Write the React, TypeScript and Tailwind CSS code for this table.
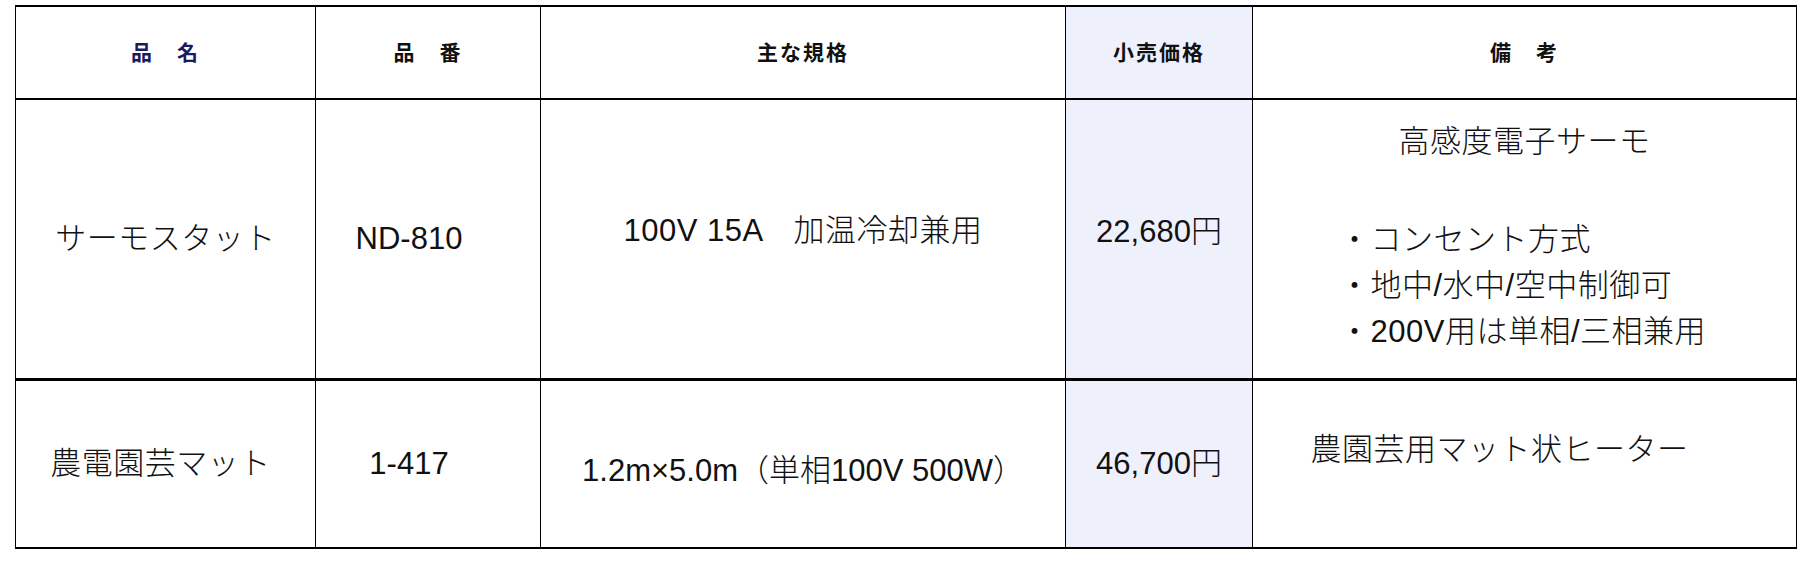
const font = "font-['Liberation_Sans','Noto_Sans_CJK_JP',sans-serif]";

export default function App() {
  return (
    <div className={`w-[1809px] h-[565px] bg-white pt-[5px] pl-[15px] text-[#111] ${font}`}>
      <table className="table-fixed border-collapse w-[1781px]">
        <colgroup>
          <col className="w-[300px]" />
          <col className="w-[225px]" />
          <col className="w-[525px]" />
          <col className="w-[187px]" />
          <col className="w-[544px]" />
        </colgroup>
        <thead>
          <tr className="h-[93px] text-[21px] font-bold tracking-[2px]">
            <th className="border-x border-x-black border-y-2 border-y-black text-[#1a1a5e] text-center">
              品　名
            </th>
            <th className="border-x border-x-black border-y-2 border-y-black text-center">品　番</th>
            <th className="border-x border-x-black border-y-2 border-y-black text-center">主な規格</th>
            <th className="border-x border-x-black border-y-2 border-y-black bg-[#eef0fc] text-center">
              小売価格
            </th>
            <th className="border-x border-x-black border-y-2 border-y-black text-center">備　考</th>
          </tr>
        </thead>
        <tbody className="text-[31px] font-light tracking-[0.5px]">
          <tr className="h-[280px]">
            <td className="border-x border-x-black border-b-[3px] border-b-black text-center align-middle">
              サーモスタット
            </td>
            <td className="border-x border-x-black border-b-[3px] border-b-black text-center align-middle pr-[38px] tracking-normal">
              ND-810
            </td>
            <td className="border-x border-x-black border-b-[3px] border-b-black text-center align-middle pb-[16px]">
              100V 15A　加温冷却兼用
            </td>
            <td className="border-x border-x-black border-b-[3px] border-b-black bg-[#eef0fc] text-center align-middle pb-[14px] tracking-normal">
              22,680円
            </td>
            <td className="border-x border-x-black border-b-[3px] border-b-black align-top pt-[19px] leading-[46px]">
              <div className="text-center">高感度電子サーモ</div>
              <div className="mt-[52px] pl-[86px] text-left">
                <div>・コンセント方式</div>
                <div>・地中/水中/空中制御可</div>
                <div>・200V用は単相/三相兼用</div>
              </div>
            </td>
          </tr>
          <tr className="h-[169px]">
            <td className="border-x border-x-black border-b-2 border-b-black text-center align-middle pr-[10px]">
              農電園芸マット
            </td>
            <td className="border-x border-x-black border-b-2 border-b-black text-center align-middle pr-[38px] tracking-normal">
              1-417
            </td>
            <td className="border-x border-x-black border-b-2 border-b-black text-center align-middle pt-[14px] tracking-normal">
              1.2m×5.0m（単相100V 500W）
            </td>
            <td className="border-x border-x-black border-b-2 border-b-black bg-[#eef0fc] text-center align-middle tracking-normal">
              46,700円
            </td>
            <td className="border-x border-x-black border-b-2 border-b-black text-center align-middle pr-[50px] pb-[28px]">
              農園芸用マット状ヒーター
            </td>
          </tr>
        </tbody>
      </table>
    </div>
  );
}
